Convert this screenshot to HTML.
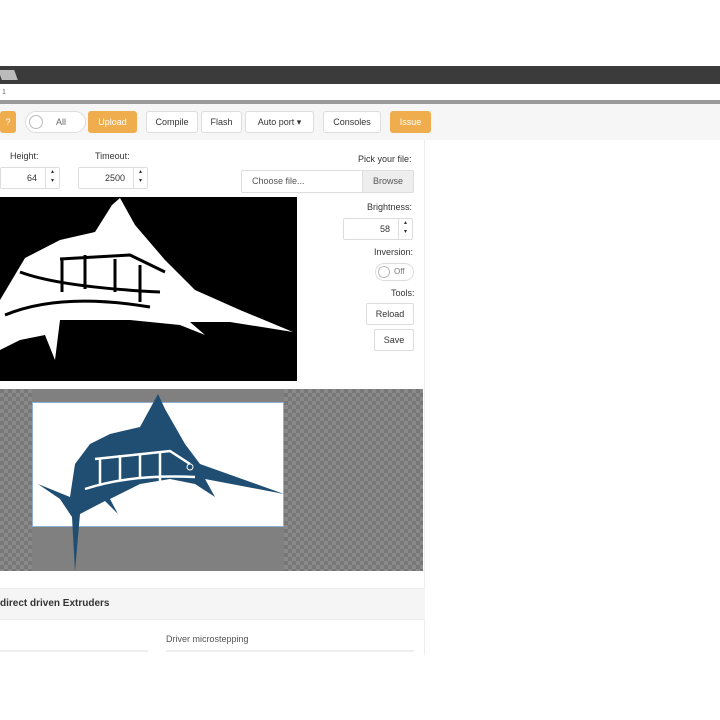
<!DOCTYPE html>
<html><head><style>
*{margin:0;padding:0;box-sizing:border-box}
body{width:720px;height:720px;background:#fff;position:relative;overflow:hidden;font-family:"Liberation Sans",sans-serif;font-size:9px;color:#333}
.a{position:absolute}
.btn{position:absolute;top:111px;height:22px;border:1px solid #ddd;background:#fff;border-radius:3px;font-size:9px;line-height:20px;text-align:center;color:#333}
.or{background:#f0ad4e;border-color:#f0ad4e;color:#fff}
.lbl{position:absolute;font-size:9px;color:#333}
.inp{position:absolute;border:1px solid #ddd;background:#fff;border-radius:2px;font-size:9px;line-height:20px}
.chk{background-color:#777;background-image:linear-gradient(45deg,#8a8a8a 25%,transparent 25%,transparent 75%,#8a8a8a 75%),linear-gradient(45deg,#8a8a8a 25%,transparent 25%,transparent 75%,#8a8a8a 75%);background-size:8px 8px;background-position:0 0,4px 4px}
</style></head><body>
<div class="a" style="left:0;top:66px;width:720px;height:18px;background:#3b3b3b"></div>
<div class="a" style="left:0;top:70px;width:16px;height:10px;background:#bbb;transform:skewX(20deg)"></div>
<div class="a" style="left:0;top:84px;width:720px;height:17px;background:#fff;font-size:7px;line-height:17px;color:#666">&nbsp;1</div>
<div class="a" style="left:0;top:100px;width:720px;height:4px;background:#999"></div>
<div class="a" style="left:0;top:104px;width:720px;height:36px;background:#f6f6f6"></div>
<div class="btn or" style="left:0;width:16px">?</div>
<div class="btn" style="left:25px;width:61px;border-radius:11px;text-align:left;padding-left:30px;color:#666">All<span class="a" style="left:3px;top:3px;width:14px;height:14px;border:1px solid #bbb;border-radius:50%"></span></div>
<div class="btn or" style="left:88px;width:49px">Upload</div>
<div class="btn" style="left:146px;width:52px">Compile</div>
<div class="btn" style="left:201px;width:41px">Flash</div>
<div class="btn" style="left:245px;width:69px">Auto port ▾</div>
<div class="btn" style="left:323px;width:58px">Consoles</div>
<div class="btn or" style="left:390px;width:41px">Issue</div>
<div class="a" style="left:0;top:140px;width:425px;height:515px;background:#fff;border-right:1px solid #eee"></div>
<div class="lbl" style="left:10px;top:151px">Height:</div>
<div class="lbl" style="left:95px;top:151px">Timeout:</div>
<div class="lbl" style="left:358px;top:154px">Pick your file:</div>
<div class="inp" style="left:0;top:167px;width:60px;height:22px;text-align:right;padding-right:22px">64<span class="a" style="right:0;top:0;width:14px;height:20px;border-left:1px solid #ddd;font-size:6px;line-height:9px;text-align:center">▴<br>▾</span></div>
<div class="inp" style="left:78px;top:167px;width:70px;height:22px;text-align:right;padding-right:22px">2500<span class="a" style="right:0;top:0;width:14px;height:20px;border-left:1px solid #ddd;font-size:6px;line-height:9px;text-align:center">▴<br>▾</span></div>
<div class="inp" style="left:241px;top:170px;width:173px;height:23px;padding-left:10px;color:#555">Choose file...<span class="a" style="right:0;top:0;width:51px;height:21px;background:#eee;border-left:1px solid #ddd;text-align:center">Browse</span></div>
<div class="lbl" style="left:367px;top:202px">Brightness:</div>
<div class="inp" style="left:343px;top:218px;width:70px;height:22px;text-align:right;padding-right:22px">58<span class="a" style="right:0;top:0;width:14px;height:20px;border-left:1px solid #ddd;font-size:6px;line-height:9px;text-align:center">▴<br>▾</span></div>
<div class="lbl" style="left:374px;top:247px">Inversion:</div>
<div class="inp" style="left:375px;top:263px;width:39px;height:18px;border-radius:9px;line-height:16px;padding-left:18px;color:#777;font-size:8px">Off<span class="a" style="left:2px;top:2px;width:12px;height:12px;border:1px solid #bbb;border-radius:50%"></span></div>
<div class="lbl" style="left:391px;top:288px">Tools:</div>
<div class="inp" style="left:366px;top:303px;width:48px;height:22px;text-align:center">Reload</div>
<div class="inp" style="left:374px;top:329px;width:40px;height:22px;text-align:center">Save</div>
<svg class="a" style="left:0;top:197px" width="297" height="184">
<rect width="297" height="184" fill="#000"/>
<polygon fill="#fff" points="0,103 25,61 60,43 95,35 112,8 120,1 135,28 165,63 195,93 240,113 293,135 230,125 190,125 205,138 180,128 130,123 60,123 55,163 45,138 20,143 0,153"/>
<g fill="none" stroke="#000" stroke-width="3"><path d="M60,62 L130,58 L165,75 M62,62 V95 M85,58 V92 M115,62 V95 M140,68 V105 M5,118 Q60,95 150,110 M20,75 Q60,90 160,95"/></g>
</svg>
<div class="a chk" style="left:0;top:389px;width:423px;height:182px"></div>
<div class="a" style="left:32px;top:389px;width:252px;height:182px;background:#808080"></div>
<div class="a" style="left:32px;top:402px;width:252px;height:125px;background:#fff;border:1px solid #8fb0d0"></div>
<svg class="a" style="left:0;top:389px" width="300" height="182">
<g fill="#1f4e72">
<polygon points="158,5 165,20 185,55 200,75 284,105 205,90 215,108 195,95 170,90 140,95 110,110 118,125 105,112 80,125 75,182 72,128 60,110 38,95 70,108 75,75 90,55 110,45 140,38"/>
</g>
<g fill="none" stroke="#fff" stroke-width="2.5"><path d="M95,70 L170,62 L190,75 M100,70 V95 M120,66 V92 M140,64 V90 M160,64 V92 M85,100 Q130,85 195,88"/></g>
<circle cx="190" cy="78" r="3" fill="none" stroke="#fff"/>
</svg>
<div class="a" style="left:0;top:588px;width:425px;height:32px;background:#f5f5f5;border-top:1px solid #eee;border-bottom:1px solid #eee;font-weight:bold;font-size:10px;line-height:30px;color:#333">direct driven Extruders</div>
<div class="lbl" style="left:166px;top:634px;color:#555">Driver microstepping</div>
<div class="a" style="left:0;top:650px;width:148px;height:2px;background:#eee"></div>
<div class="a" style="left:166px;top:650px;width:248px;height:2px;background:#eee"></div>
<div class="a" style="left:0;top:655px;width:720px;height:65px;background:#fff"></div>
</body></html>
